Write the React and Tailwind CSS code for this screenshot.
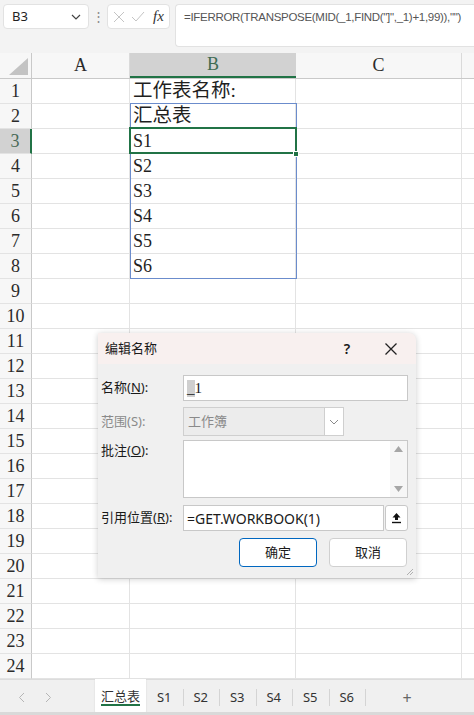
import React from "react";

const SANS = { fontFamily: '"Noto Sans", "Noto Sans CJK SC", sans-serif' };
const SERIF = { fontFamily: '"Liberation Serif", "Noto Sans CJK SC", serif' };

const cellB = {
  1: "工作表名称:",
  2: "汇总表",
  3: "S1",
  4: "S2",
  5: "S3",
  6: "S4",
  7: "S5",
  8: "S6",
};

function Row({ n }) {
  const sel = n === 3;
  const cjk = n <= 2;
  return (
    <div className="flex h-[25px]">
      <div
        className={`w-[32px] shrink-0 flex items-center justify-center text-[18px] leading-none border-b border-[#e3e3e3] ${
          sel
            ? "bg-[#d2d2d2] text-[#4a6b58] border-r-2 border-r-[#217346]"
            : "bg-[#f7f7f7] text-[#2b2b2b] border-r border-r-[#c9c9c9]"
        }`}
        style={SERIF}
      >
        {n}
      </div>
      <div className="w-[98px] shrink-0 border-r border-b border-[#e3e3e3]" />
      <div
        className={`w-[166px] shrink-0 border-r border-b border-[#e3e3e3] flex items-end pl-[3px] pb-[1px] leading-[22px] text-[#1f1f1f] ${
          cjk ? "text-[19.5px]" : "text-[18px]"
        }`}
        style={SERIF}
      >
        {cellB[n] || ""}
      </div>
      <div className="w-[166px] shrink-0 border-r border-b border-[#e3e3e3]" />
      <div className="flex-1 border-b border-[#e3e3e3]" />
    </div>
  );
}

function Dialog() {
  return (
    <div
      className="absolute left-[98px] top-[333px] w-[318px] h-[245px] bg-[#f0f0f0] rounded-tr-[7px] shadow-[0_1px_6px_rgba(0,0,0,0.2)] flex flex-col text-[13px] text-[#1a1a1a]"
      style={SANS}
    >
      <div className="h-[31px] bg-[#f8f0ef] rounded-tr-[7px] flex items-center pl-[7px] pr-[18px]">
        <span className="flex-1 text-[13px]">编辑名称</span>
        <span className="w-[14px] text-center text-[14px] font-semibold mr-[30px]">?</span>
        <svg width="14" height="14" viewBox="0 0 14 14" className="mt-[1px]">
          <path d="M1.5 1.5 L12.5 12.5 M12.5 1.5 L1.5 12.5" stroke="#222" strokeWidth="1.3" />
        </svg>
      </div>

      {/* name */}
      <div className="flex items-center mt-[11px] pl-[3px]">
        <div className="w-[82px]">
          名称(<span className="underline">N</span>):
        </div>
        <div className="w-[225px] h-[26px] bg-white border border-[#c8c8c8] flex items-center pl-[3px] text-[15px]" style={SERIF}>
          <span className="bg-[#cfcfcf] leading-[17px]">_</span>
          <span className="leading-[17px]">1</span>
        </div>
      </div>

      {/* scope */}
      <div className="flex items-center mt-[6px] pl-[3px]">
        <div className="w-[82px] text-[#8a8a8a]">范围(S):</div>
        <div className="w-[161px] h-[29px] bg-[#ececec] border border-[#cfcfcf] flex items-center">
          <span className="flex-1 pl-[4px] text-[#8a8a8a]">工作簿</span>
          <div className="w-[19px] h-full bg-white border-l border-[#cfcfcf] flex items-center justify-center">
            <svg width="10" height="6" viewBox="0 0 10 6">
              <path d="M1 1 L5 5 L9 1" fill="none" stroke="#8a8a8a" strokeWidth="1" />
            </svg>
          </div>
        </div>
      </div>

      {/* comment */}
      <div className="flex items-start mt-[4px] pl-[3px]">
        <div className="w-[82px] pt-[1px]">
          批注(<span className="underline">O</span>):
        </div>
        <div className="w-[225px] h-[58px] bg-white border border-[#c8c8c8] flex justify-end">
          <div className="w-[17px] h-full bg-[#f6f6f6] flex flex-col items-center justify-between py-[5px]">
            <svg width="9" height="6" viewBox="0 0 9 6">
              <path d="M0 6 L4.5 0 L9 6 Z" fill="#a6a6a6" />
            </svg>
            <svg width="9" height="6" viewBox="0 0 9 6">
              <path d="M0 0 L4.5 6 L9 0 Z" fill="#a6a6a6" />
            </svg>
          </div>
        </div>
      </div>

      {/* reference */}
      <div className="flex items-center mt-[7px] pl-[3px]">
        <div className="w-[82px]">
          引用位置(<span className="underline">R</span>):
        </div>
        <div className="w-[201px] h-[26px] bg-white border border-[#c8c8c8] flex items-center pl-[3px] text-[14px] text-[#1a1a1a]">
          =GET.WORKBOOK(1)
        </div>
        <div className="w-[23px] h-[26px] ml-[1px] bg-white border border-[#c8c8c8] rounded-[3px] flex items-center justify-center">
          <svg width="11" height="12" viewBox="0 0 11 12">
            <path d="M5.5 1 L1.5 5.5 L4 5.5 L4 8 L7 8 L7 5.5 L9.5 5.5 Z" fill="#111" />
            <path d="M1 10.5 L10 10.5" stroke="#111" strokeWidth="1.4" />
          </svg>
        </div>
      </div>

      {/* buttons */}
      <div className="flex mt-[7px] pl-[141px] gap-[12px]">
        <div className="w-[78px] h-[29px] bg-white border border-[#0067c0] rounded-[4px] flex items-center justify-center">
          确定
        </div>
        <div className="w-[78px] h-[29px] bg-white border border-[#d0d0d0] rounded-[4px] flex items-center justify-center">
          取消
        </div>
      </div>

      <svg width="9" height="9" viewBox="0 0 9 9" className="absolute right-[2px] bottom-[2px]">
        <path d="M8 2 L2 8 M8 5 L5 8" stroke="#b0b0b0" strokeWidth="1" />
      </svg>
    </div>
  );
}

export default function App() {
  const rows = Array.from({ length: 24 }, (_, i) => i + 1);
  return (
    <div className="relative w-[474px] h-[715px] overflow-hidden bg-white" style={SANS}>
      {/* formula bar */}
      <div className="h-[53px] bg-[#f3f3f3] flex items-start pt-[4px] pl-[3px]">
        <div className="w-[86px] h-[25px] bg-white rounded-[4px] border border-[#e2e2e2] flex items-center justify-between pl-[8px] pr-[7px] text-[13px] text-[#222]">
          <span>B3</span>
          <svg width="10" height="6" viewBox="0 0 10 6">
            <path d="M1 1 L5 5 L9 1" fill="none" stroke="#444" strokeWidth="1.2" />
          </svg>
        </div>
        <div className="w-[18px] h-[25px] flex items-center justify-center text-[#8a8a8a] text-[13px]">⋮</div>
        <div className="w-[63px] h-[25px] bg-white rounded-[4px] border border-[#e2e2e2] flex items-center pl-[5px] gap-[6px]">
          <svg width="12" height="12" viewBox="0 0 12 12">
            <path d="M1 1 L11 11 M11 1 L1 11" stroke="#c4c4c4" strokeWidth="1" />
          </svg>
          <svg width="14" height="12" viewBox="0 0 14 12">
            <path d="M1 6 L5 10 L13 1" fill="none" stroke="#c4c4c4" strokeWidth="1" />
          </svg>
          <span className="italic text-[15px] text-[#333] ml-[2px] leading-none" style={SERIF}>
            fx
          </span>
        </div>
        <div
          className="ml-[5px] flex-1 h-[43px] bg-white rounded-l-[4px] border border-r-0 border-[#e2e2e2] pl-[8px] pt-[4px] text-[11.5px] tracking-[-0.3px] leading-[16px] text-[#555] whitespace-nowrap overflow-hidden"
          style={{ fontFamily: '"Liberation Sans", "Noto Sans", sans-serif' }}
        >
          =IFERROR(TRANSPOSE(MID(_1,FIND("]",_1)+1,99)),"")
        </div>
      </div>

      {/* column header row */}
      <div className="flex h-[26px] border-b border-[#c9c9c9]" style={SERIF}>
        <div className="w-[32px] shrink-0 bg-[#f7f7f7] border-r border-[#c9c9c9] flex items-end justify-end p-[3px]">
          <svg width="19" height="17" viewBox="0 0 19 17">
            <path d="M19 0 L19 17 L0 17 Z" fill="#c3c3c3" />
          </svg>
        </div>
        <div className="w-[98px] shrink-0 bg-[#f7f7f7] border-r border-[#dadada] flex items-center justify-center text-[18px] text-[#2b2b2b]">
          A
        </div>
        <div className="w-[166px] shrink-0 bg-[#d2d2d2] border-b-2 border-[#217346] flex items-center justify-center text-[18px] text-[#3f6b52]">
          B
        </div>
        <div className="w-[166px] shrink-0 bg-[#f7f7f7] border-r border-[#dadada] flex items-center justify-center text-[18px] text-[#2b2b2b]">
          C
        </div>
        <div className="flex-1 bg-[#f7f7f7]" />
      </div>

      {/* rows */}
      <div>
        {rows.map((n) => (
          <Row key={n} n={n} />
        ))}
      </div>

      {/* tab bar */}
      <div className="h-[36px] bg-[#f0f0f0] border-t border-[#dcdcdc] flex items-stretch text-[13px] text-[#333] relative">
        <div className="w-[95px] flex items-center pl-[18px] gap-[20px] text-[#b5b5b5]">
          <svg width="7" height="11" viewBox="0 0 7 11">
            <path d="M6 1 L1.5 5.5 L6 10" fill="none" stroke="#b5b5b5" strokeWidth="1" />
          </svg>
          <svg width="7" height="11" viewBox="0 0 7 11">
            <path d="M1 1 L5.5 5.5 L1 10" fill="none" stroke="#b5b5b5" strokeWidth="1" />
          </svg>
        </div>
        <div className="w-[51px] bg-white rounded-b-[4px] flex items-center justify-center -mt-px shadow-[0_1px_2px_rgba(0,0,0,0.12)]">
          <span className="border-b-2 border-[#217346] leading-[16px]">汇总表</span>
        </div>
        {["S1", "S2", "S3", "S4", "S5", "S6"].map((s, i) => (
          <div key={s} className="w-[36.5px] flex items-center justify-center relative">
            {i > 0 && <div className="absolute left-0 top-[9px] h-[17px] border-l border-[#d4d4d4]" />}
            {s}
          </div>
        ))}
        <div className="w-[2px] relative">
          <div className="absolute left-0 top-[9px] h-[17px] border-l border-[#d4d4d4]" />
        </div>
        <div className="w-[80px] flex items-center justify-center text-[16px] text-[#666]">+</div>
        <div className="absolute left-0 right-0 bottom-0 h-[3px] bg-[#d9d9d9]" />
      </div>

      {/* spill range border B2:B8 */}
      <div className="absolute left-[130px] top-[103px] w-[167px] h-[176px] border border-[#6b8ccc] pointer-events-none" />
      {/* active cell B3 */}
      <div className="absolute left-[129px] top-[127px] w-[168px] h-[27px] border-2 border-[#217346] pointer-events-none" />
      <div className="absolute left-[293px] top-[151px] w-[6px] h-[6px] bg-[#217346] border border-white" />

      <Dialog />
    </div>
  );
}
